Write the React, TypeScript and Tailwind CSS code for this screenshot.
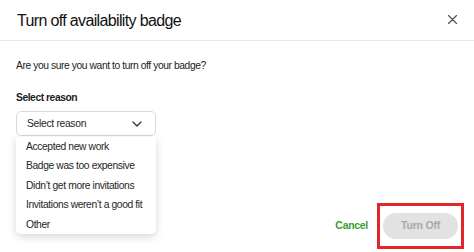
import React from 'react';

const reasons = [
  'Accepted new work',
  'Badge was too expensive',
  "Didn’t get more invitations",
  "Invitations weren’t a good fit",
  'Other',
];

const App: React.FC = () => {
  return (
    <div className="w-[474px] h-[252px] bg-white overflow-hidden font-['Liberation_Sans',Arial,sans-serif] text-[#222]">
      {/* header */}
      <div className="h-[41px] px-4 flex items-center justify-between border-b border-[#e6e6e6]">
        <h2 className="text-[16px] font-medium tracking-[-0.65px] text-[#111] pt-[1px] pl-[1px]">
          Turn off availability badge
        </h2>
        <svg width="9" height="9" viewBox="0 0 9 9" className="mr-[1px] mt-[-1px]">
          <path d="M0.5 0.5 L8.5 8.5 M8.5 0.5 L0.5 8.5" stroke="#555" strokeWidth="1.3" strokeLinecap="round" />
        </svg>
      </div>

      {/* body */}
      <div className="px-4">
        <p className="mt-[18px] text-[10.3px] leading-[14px] tracking-[-0.42px] text-[#222]">
          Are you sure you want to turn off your badge?
        </p>
        <p className="mt-[18px] text-[10.3px] leading-[14px] font-semibold tracking-[-0.45px] text-[#1d1d1d]">
          Select reason
        </p>

        <div className="relative mt-[6px] w-[140px]">
          <div className="h-[25px] border border-[#d9d9d9] rounded-[5px] flex items-center justify-between pl-[10px] pr-[13px]">
            <span className="text-[10.3px] tracking-[-0.3px] text-[#262626]">Select reason</span>
            <svg width="10" height="6" viewBox="0 0 10 6">
              <path d="M1 1 L5 5 L9 1" fill="none" stroke="#333" strokeWidth="1.3" strokeLinecap="round" strokeLinejoin="round" />
            </svg>
          </div>
          <ul className="absolute left-0 top-[26px] w-[140px] bg-white rounded-b-[5px] shadow-[0_3px_8px_rgba(0,0,0,0.16)]">
            {reasons.map((r) => (
              <li
                key={r}
                className="h-[19.4px] flex items-center pl-[10px] text-[10.3px] tracking-[-0.38px] text-[#262626]"
              >
                {r}
              </li>
            ))}
          </ul>
        </div>
      </div>

      {/* footer */}
      <div className="mt-[76px] pr-4 flex items-center justify-end gap-[15px]">
        <button className="text-[10.5px] font-semibold tracking-[-0.3px] text-[#3c9d2f]">Cancel</button>
        <div className="relative">
          <button className="w-[75px] h-[26px] rounded-full bg-[#e2e2e2] text-[10.5px] font-semibold tracking-[-0.2px] text-[#a8a8a8]">
            Turn Off
          </button>
          <div className="absolute -left-[6px] -right-[6px] -top-[9px] -bottom-[10px] border-[3px] border-[#e3262b]" />
        </div>
      </div>
    </div>
  );
};

export default App;
